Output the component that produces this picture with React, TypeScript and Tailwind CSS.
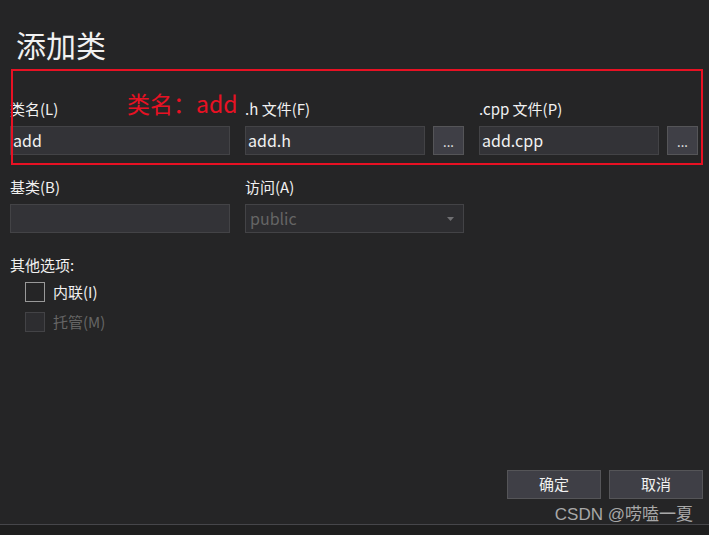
import React from "react";

const font = "font-['Noto_Sans_CJK_SC','Noto_Sans',sans-serif]";

const Field = ({ label, children, disabled }: { label: string; children: React.ReactNode; disabled?: boolean }) => (
    <div className="flex flex-col">
        <div className={`h-5 leading-5 text-[15px] ${disabled ? "text-[#656565]" : "text-[#f1f1f1]"}`}>{label}</div>
        <div className="mt-[7px] flex">{children}</div>
    </div>
);

const TextBox = ({ value, w }: { value?: string; w: string }) => (
    <div className={`${w} h-[29px] bg-[#333337] border border-[#434346] px-[2px] text-[16px] leading-[27px] text-[#f1f1f1]`}>
        {value}
    </div>
);

const Browse = () => (
    <div className="ml-[8px] w-[31px] h-[29px] bg-[#3f3f46] border border-[#555558] flex items-center justify-center text-[13px] text-[#f1f1f1] leading-none pt-[2px]">
        ...
    </div>
);

const App = () => {
    return (
        <div className={`w-[709px] h-[535px] bg-[#252526] text-[#f1f1f1] flex flex-col relative overflow-hidden ${font}`}>
            <div className="flex-1 flex flex-col pl-[10px]">
                <h1 className="ml-[6px] mt-[28px] text-[30px] leading-[32px]">添加类</h1>

                <div className="mt-[39px] grid grid-cols-[220px_219px_219px] gap-x-[15px] gap-y-[22px]">
                    <Field label="类名(L)">
                        <TextBox value="add" w="w-[220px]" />
                    </Field>
                    <Field label=".h 文件(F)">
                        <TextBox value="add.h" w="w-[180px]" />
                        <Browse />
                    </Field>
                    <Field label=".cpp 文件(P)">
                        <TextBox value="add.cpp" w="w-[180px]" />
                        <Browse />
                    </Field>

                    <Field label="基类(B)">
                        <TextBox w="w-[220px]" />
                    </Field>
                    <Field label="访问(A)">
                        <div className="w-[219px] h-[29px] bg-[#2d2d30] border border-[#434346] px-[4px] flex items-center justify-between text-[16px] text-[#656565]">
                            <span className="leading-[27px]">public</span>
                            <svg width="7" height="4" viewBox="0 0 7 4" className="mr-[5px]">
                                <path d="M0 0 L7 0 L3.5 4 Z" fill="#6f6f72" />
                            </svg>
                        </div>
                    </Field>
                </div>

                <div className="mt-[22px] h-5 leading-5 text-[15px]">其他选项:</div>
                <div className="mt-[7px] pl-[15px] flex flex-col gap-[10px]">
                    <div className="flex items-center gap-[8px]">
                        <div className="w-5 h-5 border border-[#999999]" />
                        <span className="text-[15px] leading-5">内联(I)</span>
                    </div>
                    <div className="flex items-center gap-[8px]">
                        <div className="w-5 h-5 bg-[#2d2d30] border border-[#434346]" />
                        <span className="text-[15px] leading-5 text-[#656565]">托管(M)</span>
                    </div>
                </div>

                <div className="mt-auto mb-[25px] pr-[6px] flex justify-end gap-[8px]">
                    <button className="w-[94px] h-[29px] bg-[#3f3f46] border border-[#555558] text-[15px] text-[#f1f1f1]">确定</button>
                    <button className="w-[94px] h-[29px] bg-[#3f3f46] border border-[#555558] text-[15px] text-[#f1f1f1]">取消</button>
                </div>
            </div>
            <div className="h-[11px] border-t border-[#46464a] bg-[#1e1e1e]" />

            {/* red annotation */}
            <div className="absolute left-[11px] top-[69px] w-[692px] h-[96px] border-2 border-[#e81123]" />
            <div className="absolute left-[127px] top-[91px] text-[23px] leading-[24px] text-[#e81123]">类名：add</div>

            {/* watermark */}
            <div className="absolute right-[16px] top-[504px] text-[17px] leading-[22px] text-[#a8a8a8] font-['Liberation_Sans','Noto_Sans_CJK_SC',sans-serif]">
                CSDN @唠嗑一夏
            </div>
        </div>
    );
};

export default App;
